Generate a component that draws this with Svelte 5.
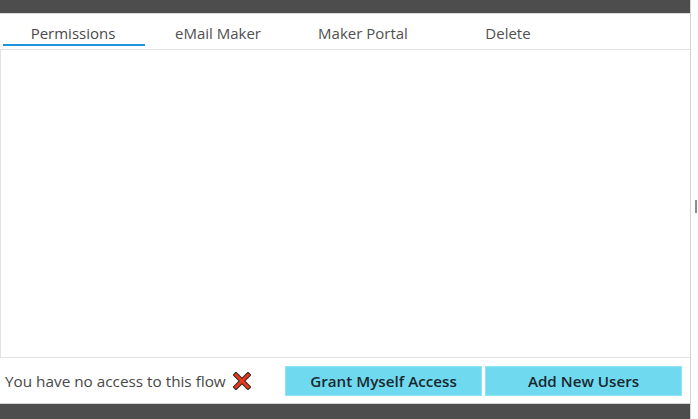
<script>
  const tabs = ['Permissions', 'eMail Maker', 'Maker Portal', 'Delete'];
</script>

<div class="page">
  <div class="window">
    <div class="topbar"></div>
    <nav class="tabs">
      {#each tabs as tab, i}
        <div class="tab" class:active={i === 0}>{tab}</div>
      {/each}
    </nav>
    <main class="content"></main>
    <footer class="footer">
      <div class="status">
        <span>You have no access to this flow</span>
        <svg class="cross" width="18" height="18" viewBox="0 0 18 18" aria-hidden="true">
          <path d="M3 3 L15 15 M15 3 L3 15" stroke="#2a2a2a" stroke-width="5" stroke-linecap="square" />
          <path d="M3 3 L15 15 M15 3 L3 15" stroke="#e8391a" stroke-width="3" stroke-linecap="square" />
        </svg>
      </div>
      <div class="actions">
        <button class="btn">Grant Myself Access</button>
        <button class="btn">Add New Users</button>
      </div>
    </footer>
    <div class="bottombar"></div>
  </div>
  <div class="gutter"><div class="handle"></div></div>
</div>

<style>
  :global(body) {
    margin: 0;
    background: #fff;
  }
  .page {
    display: flex;
    width: 698px;
    height: 419px;
    overflow: hidden;
    font-family: "Open Sans", "Noto Sans", sans-serif;
  }
  .window {
    width: 690px;
    display: flex;
    flex-direction: column;
    border-right: 1px solid #d4d4d4;
  }
  .gutter {
    flex: 1;
    display: flex;
    justify-content: flex-end;
    align-items: flex-start;
    background: #fdfdfd;
  }
  .handle {
    width: 2px;
    height: 13px;
    margin-top: 200px;
    margin-right: 1px;
    background: #8c8c8c;
  }
  .topbar {
    height: 13px;
    background: #4d4d4d;
    border-bottom: 1px solid #d9d9d9;
  }
  .tabs {
    height: 32px;
    display: flex;
    gap: 3px;
    padding-left: 3px;
  }
  .tab {
    width: 142px;
    height: 32px;
    box-sizing: border-box;
    padding: 8.5px 2px 0 0;
    text-align: center;
    font-size: 15px;
    line-height: 20px;
    color: #505050;
  }
  .tab.active {
    border-bottom: 2px solid #1b96dc;
    color: #4a4a4a;
  }
  .content {
    height: 307px;
    margin-top: 3px;
    border: 1px solid #e2e2e2;
    border-right: none;
    background: #fff;
  }
  .footer {
    height: 45px;
    box-sizing: border-box;
    display: flex;
    align-items: center;
    justify-content: space-between;
    padding: 1px 8px 0 5px;
  }
  .status {
    display: flex;
    align-items: center;
    gap: 7px;
    font-size: 15.3px;
    color: #484848;
  }
  .cross {
    display: block;
  }
  .actions {
    display: flex;
    gap: 3px;
  }
  .btn {
    width: 197px;
    height: 30px;
    padding: 0;
    border: 1px solid #8fe4f5;
    background: #6fd9f0;
    font: 600 15.2px "Open Sans", "Noto Sans", sans-serif;
    color: #18282e;
  }
  .bottombar {
    flex: 1;
    background: #4d4d4d;
    border-top: 1px solid #d4d4d4;
  }
</style>
